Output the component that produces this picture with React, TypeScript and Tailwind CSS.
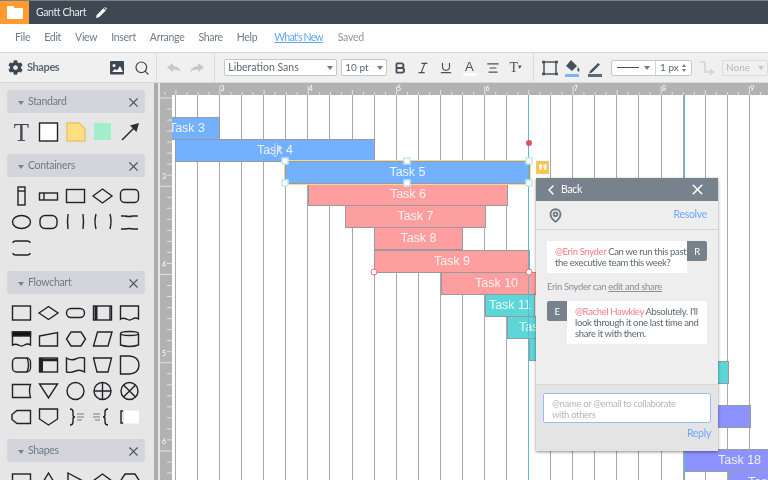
import { ReactNode } from "react";
import { Bold, ChevronLeft, Italic, Underline, X, Search, MapPin, AlignCenter } from "lucide-react";
import { FaCog } from "react-icons/fa";

const GRID_LINES = Array.from({ length: 27 }, (_, i) => 175 + i * 22.07);
const MAJOR_TICKS = [3, 4, 5, 6, 7, 8, 9];

const BARS = [
  { label: "Task 3", left: 154, right: 219, top: 117, color: "#73b1ff" },
  { label: "Task 4", left: 175, right: 374, top: 139, color: "#73b1ff" },
  { label: "Task 5", left: 285, right: 529, top: 161, color: "#73b1ff" },
  { label: "Task 6", left: 308, right: 507, top: 183, color: "#ff9e9e" },
  { label: "Task 7", left: 345, right: 485, top: 205, color: "#ff9e9e" },
  { label: "Task 8", left: 374, right: 462, top: 227, color: "#ff9e9e" },
  { label: "Task 9", left: 374, right: 529, top: 250, color: "#ff9e9e" },
  { label: "Task 10", left: 441, right: 551, top: 272, color: "#ff9e9e" },
  { label: "Task 11", left: 485, right: 534, top: 294, color: "#5cd6d6" },
  { label: "Task 12", left: 507, right: 573, top: 316, color: "#5cd6d6" },
  { label: "Task 13", left: 529, right: 640, top: 338, color: "#5cd6d6" },
  { label: "Task 14", left: 600, right: 728, top: 361, color: "#5cd6d6" },
  { label: "Task 16", left: 600, right: 750, top: 405, color: "#8c93ff" },
  { label: "Task 18", left: 684, right: 794, top: 449, color: "#8c93ff" },
  { label: "Task 19", left: 728, right: 810, top: 471, color: "#8c93ff" },
];

const MENU = ["File", "Edit", "View", "Insert", "Arrange", "Share", "Help"];

const Icon = ({ children }: { children: ReactNode }) => (
  <svg width="27" height="26" viewBox="0 0 27 26" fill="none" stroke="#1f2327" strokeWidth="1.4">
    {children}
  </svg>
);

const STANDARD = [
  <text key="t" x="13.5" y="22" textAnchor="middle" fontFamily="Liberation Serif" fontSize="25" fill="#3d4852" stroke="none">T</text>,
  <rect key="r" x="4.5" y="4" width="18" height="18" fill="#fff" strokeWidth="1.4" />,
  <path key="n" d="M5 4h12l6 6v12H5z" fill="#ffdf80" stroke="#e8c468" />,
  <rect key="g" x="5" y="4" width="17" height="17" fill="#a0efc8" stroke="none" />,
  <g key="a"><path d="M6 21L20 7" strokeWidth="1.4" /><path d="M23 4l-9 2.5 6.5 6.5z" fill="#2b2f33" stroke="none" /></g>,
];

const CONTAINERS = [
  <g key="1"><rect x="10" y="4" width="7" height="18" /><path d="M10 8h7" /></g>,
  <g key="2"><rect x="4.5" y="10" width="18" height="7" /><path d="M9 10v7" /></g>,
  <rect key="3" x="4.5" y="6.5" width="18" height="13" />,
  <path key="4" d="M4 13l9.5-7 9.5 7-9.5 7z" />,
  <rect key="5" x="4.5" y="6.5" width="18" height="13" rx="4" />,
  <ellipse key="6" cx="13.5" cy="13" rx="9" ry="6.5" />,
  <rect key="7" x="5" y="6.5" width="17" height="13" rx="5" />,
  <path key="8" d="M6 5q-1 7.500 0 15M21 5q1 7.500 0 15" />,
  <path key="9" d="M7 5q-2 7.500 0 15M21 5q2 7.500 0 15" />,
  <path key="10" d="M5 7h4q4 1 8 0h5M5 20h4q4-1 8 0h5" />,
  <path key="11" d="M5 8q0-2 3-2h11q3 0 3 2M5 18q0 2 3 2h11q3 0 3-2" />,
];

const FLOWCHART = [
  <rect key="1" x="4.500" y="6" width="18" height="14" />,
  <path key="2" d="M4 13l9.500-6.500 9.500 6.500-9.500 6.500z" />,
  <rect key="3" x="4.500" y="8.500" width="18" height="9" rx="4.500" />,
  <g key="4"><rect x="4.500" y="6" width="18" height="14" /><path d="M7 6v14" strokeWidth="3" /><path d="M21 6v14" /></g>,
  <path key="5" d="M4.500 6h18v13q-3-2-6 0t-6 0q-3-1.500-6 0z" />,
  <g key="6"><path d="M4.500 6h18v13q-3-2-6 0t-6 0q-3-1.500-6 0z" /><rect x="4.500" y="6" width="18" height="4" fill="#111" /></g>,
  <path key="7" d="M4.500 10l18-3.500v13.500h-18z" />,
  <path key="8" d="M9 6h10l4.500 7-4.500 7H9l-4.500-7z" />,
  <path key="9" d="M8.500 6h14.500l-4 14H4.500z" />,
  <g key="10"><path d="M4.500 8v11q9 3 18 0V8" /><ellipse cx="13.500" cy="7.500" rx="9" ry="2" /></g>,
  <g key="11"><rect x="4.500" y="6" width="18" height="14" rx="4" /><path d="M19 6q3 7 0 14" /></g>,
  <g key="12"><rect x="4.500" y="6" width="18" height="14" /><path d="M6.500 6v14" strokeWidth="3" /><path d="M4.500 8h18" strokeWidth="2.500" /></g>,
  <path key="13" d="M4.500 6q4.500 3 9 1t9-1v14q-4.500-3-9-1t-9 1z" />,
  <path key="14" d="M4.500 6h18l-3.500 14h-11z" />,
  <path key="15" d="M4.500 4h9q9.500 1 9.500 9t-9.500 9h-9z" />,
  <path key="16" d="M4.500 6.500h18q-2 6.500 0 13h-18z" />,
  <path key="17" d="M4.500 6h18l-9 14z" />,
  <circle key="18" cx="13.500" cy="13" r="8.500" />,
  <g key="19"><circle cx="13.500" cy="13" r="8.500" /><path d="M5 13h17M13.500 4.500v17" /></g>,
  <g key="20"><circle cx="13.500" cy="13" r="8.500" /><path d="M7.500 7l12 12M19.500 7l-12 12" /></g>,
  <path key="21" d="M9 6.500h13.500v13H9l-5-4v-5z" />,
  <path key="22" d="M4.500 5h18v10l-9 6-9-6z" />,
  <g key="23"><path d="M8 5q3 0 3 3v3q0 2 2 2-2 0-2 2v3q0 3-3 3" /><path d="M15 10h7M15 13h7M15 16h5" stroke="#9aa0a6" strokeWidth="1.300" /></g>,
  <g key="24"><path d="M19 5q-3 0-3 3v3q0 2-2 2 2 0 2 2v3q0 3 3 3" /><path d="M4 10h7M4 13h7M6 16h5" stroke="#9aa0a6" strokeWidth="1.300" /></g>,
  <g key="25"><rect x="8" y="6.500" width="15" height="13" fill="#fff" stroke="none" /><path d="M7 7H5v12h2" /></g>,
];

const SHAPES = [
  <rect key="1" x="4.500" y="6" width="18" height="14" />,
  <path key="2" d="M13.500 5l9 15h-18z" />,
  <path key="3" d="M6 5l15 8-15 8z" />,
  <path key="4" d="M4 13l9.500-7 9.500 7-9.500 7z" />,
  <path key="5" d="M9 6h10l4.500 7-4.500 7H9l-4.500-7z" />,
];

const Section = ({ title, shapes, className = "mb-[8px]" }: { title: string; shapes: ReactNode[]; className?: string }) => (
  <div className={className}>
    <div className="flex h-[23px] items-center rounded-[3px] bg-[#d3d5da] pl-[11px] pr-[4px] pt-px text-[10.5px] tracking-[-0.3px] text-[#6f7a85]">
      <span className="mr-[4px] mt-[1px] h-0 w-0 border-x-[3px] border-t-[4px] border-x-transparent border-t-[#78828c]" />
      <span>{title}</span>
      <X size={15} strokeWidth={1.8} className="ml-auto text-[#4c5560]" />
    </div>
    <div className="mt-[6px] grid grid-cols-[repeat(5,27px)] auto-rows-[26px] pb-[1px] pl-[1px]">
      {shapes.map((shape, i) => (
        <Icon key={i}>{shape}</Icon>
      ))}
    </div>
  </div>
);

const Select = ({ label, className, muted }: { label: string; className: string; muted?: boolean }) => (
  <div className={`flex h-[17px] items-center justify-between rounded-[2px] border px-[3px] ${muted ? "border-[#dcdcdc] text-[#b5b9bd]" : "border-[#c4c7ca] bg-white text-[#5d6873]"} ${className}`}>
    <span>{label}</span>
    <span className={`h-0 w-0 border-x-[3px] border-t-[4px] border-x-transparent ${muted ? "border-t-[#c4c7ca]" : "border-t-[#6f7a85]"}`} />
  </div>
);

const Rulers = () => (
  <>
    <svg className="absolute left-0 top-0 z-20" width="608" height="12">
      <rect width="608" height="12" fill="#b2b2b2" />
      {Array.from({ length: 60 }, (_, i) => (
        <line key={i} x1={60 + (i - 8) * 11.03} x2={60 + (i - 8) * 11.03} y1={i % 8 === 0 ? 3 : i % 4 === 0 ? 7 : 9} y2="12" stroke="#e3e3e3" />
      ))}
      {MAJOR_TICKS.map((n, i) => (
        <text key={n} x={60.5 + i * 88.3} y="7.500" fontFamily="Lato" fontSize="7" fill="#fff">{n}</text>
      ))}
    </svg>
    <svg className="absolute left-0 top-[12px] z-20" width="12" height="385">
      <rect width="12" height="385" fill="#b2b2b2" />
      {Array.from({ length: 36 }, (_, i) => (
        <line key={i} x1={i % 8 === 0 ? 0 : 7} x2="12" y1={i * 11.03 + 3} y2={i * 11.03 + 3} stroke="#e3e3e3" />
      ))}
      {[3, 4, 5, 6].map((n, i) => (
        <text key={n} x="2" y={84 + i * 88.3} fontFamily="Lato" fontSize="7" fill="#fff">{n}</text>
      ))}
    </svg>
  </>
);

const Handle = ({ x, y, round }: { x: number; y: number; round?: boolean }) => (
  <div
    className={`absolute z-10 h-[7px] w-[7px] -translate-x-1/2 -translate-y-1/2 border bg-white ${round ? "rounded-full border-[#ee6e73]" : "border-[#a8dcec]"}`}
    style={{ left: x - 160, top: y - 83 }}
  />
);

const CommentPanel = () => (
  <div className="absolute left-[376px] top-[95px] z-30 flex h-[273px] w-[182px] flex-col bg-[#eeeeee] text-[9.5px] tracking-[-0.35px] text-[#5d6873] shadow-[0_1px_3px_rgba(0,0,0,0.45)]">
    <div className="flex h-[23px] items-center bg-[#78828c] pl-[7px] pr-[12px] text-[10.5px] tracking-[-0.3px] text-white">
      <ChevronLeft size={16} strokeWidth={2.2} />
      <span className="ml-[2px]">Back</span>
      <X size={17} strokeWidth={2.2} className="ml-auto" />
    </div>
    <div className="flex h-[29px] items-center border-b border-[#d5d5d5] pl-[12px] pr-[11px]">
      <MapPin size={15} strokeWidth={3} className="text-[#6f7a85]" />
      <span className="ml-auto text-[10.5px] tracking-[-0.3px] text-[#6aaaf5]">Resolve</span>
    </div>
    <div className="flex-1 whitespace-nowrap px-[11px] pt-[11px] leading-[11px]">
      <div className="flex">
        <div className="h-[32px] w-[140px] bg-white pl-[8px] pt-[5px]">
          <span className="text-[#f07c7c]">@Erin Snyder</span> Can we run this past
          <br />
          the executive team this week?
        </div>
        <div className="flex h-[20px] w-[20px] items-center justify-center rounded-r-[2px] bg-[#78828c] text-white">R</div>
      </div>
      <div className="mt-[8px] h-[20px] text-[#8a9097]">
        Erin Snyder can <span className="underline">edit and share</span>
      </div>
      <div className="flex">
        <div className="flex h-[20px] w-[20px] items-center justify-center rounded-l-[2px] bg-[#78828c] text-white">E</div>
        <div className="h-[43px] w-[140px] bg-white pl-[8px] pt-[5px]">
          <span className="text-[#f07c7c]">@Rachel Hawkley</span> Absolutely. I'll
          <br />
          look through it one last time and
          <br />
          share it with them.
        </div>
      </div>
    </div>
    <div className="flex h-[67px] flex-col border-t border-[#d8d8d8] bg-[#e4e4e4] px-[7px] pt-[8px]">
      <div className="h-[30px] rounded-[2px] border border-[#8ec0ff] bg-white px-[8px] pt-[4px] leading-[11px] text-[#b4b8bc]">
        @name or @email to collaborate
        <br />
        with others
      </div>
      <div className="mt-[3px] text-right text-[10.5px] tracking-[-0.3px] text-[#6aaaf5]">Reply</div>
    </div>
  </div>
);

const Canvas = () => (
  <div className="relative flex-1 overflow-hidden bg-white">
    <svg className="absolute left-0 top-0" width="608" height="397">
      {GRID_LINES.map((x) => (
        <line key={x} x1={Math.round(x) - 159.5} x2={Math.round(x) - 159.5} y1="12" y2="397" stroke="#a8a8a8" />
      ))}
    </svg>
    {BARS.map((bar) => (
      <div
        key={bar.label}
        className="absolute flex h-[23px] items-center justify-center border border-[#979a9e] font-['Liberation_Sans'] text-[12.500px] text-white/85"
        style={{ left: bar.left - 160, top: bar.top - 83, width: bar.right - bar.left + 1, backgroundColor: bar.color }}
      >
        {bar.label}
      </div>
    ))}
    <div className="absolute left-[124px] top-[77px] h-[25px] w-[247px] border border-[#f5dc8c]" />
    <div className="absolute left-[368px] top-0 h-full w-px bg-[#5fb6d6]" />
    <div className="absolute left-[524px] top-0 h-full w-px bg-[#5fb6d6]" />
    <div className="absolute left-[366px] top-[57px] h-[6px] w-[6px] rounded-full bg-[#e0505f]" />
    <svg className="absolute left-[110px] top-[60px]" width="12" height="16" fill="#d5e4fa" stroke="#c2d4ec">
      <path d="M5 0l0 14M2 11l3 3 3-3" fill="none" />
      <path d="M7 5l3-2.500 2 2.500-2 2.500z" stroke="none" />
    </svg>
    {[285, 407, 529].map((x) => (
      <Handle key={x} x={x} y={161} />
    ))}
    {[285, 407, 529].map((x) => (
      <Handle key={x} x={x} y={183} />
    ))}
    <Handle x={374} y={272} round />
    <Handle x={529} y={272} round />
    <svg className="absolute left-[376px] top-[78px]" width="13" height="13" viewBox="0 0 13 13">
      <rect width="13" height="13" fill="#f9c55a" />
      <path d="M3 3.500h3v3L5 9H3.500l.5-2.500H3zM7.500 3.500h3v3L9.500 9H8l.5-2.500h-1z" fill="#fff" />
    </svg>
    <CommentPanel />
    <Rulers />
  </div>
);

const Toolbar = () => (
  <div className="flex h-[31px] items-center border-y border-[#d8d8d8] bg-[#f0f0f0] text-[#5d6873]">
    <div className="flex h-full w-[159px] items-center border-r border-[#dcdcdc] pl-[8px] pr-[6px]">
      <FaCog size={15} className="text-[#3d4852]" />
      <span className="ml-[4px] text-[11px] font-bold tracking-[-0.4px] text-[#5d6873]">Shapes</span>
      <svg className="ml-auto mr-[9px]" width="15" height="14" viewBox="0 0 15 14">
        <rect width="14" height="13.500" rx="1" fill="#3d4852" />
        <circle cx="4" cy="4.500" r="1.500" fill="#fff" />
        <path d="M2 11l3-3 2 1.500L10 5l3 6z" fill="#fff" />
      </svg>
      <Search size={16} strokeWidth={1.8} className="text-[#3d4852]" />
    </div>
    <div className="flex h-full w-[59px] items-center justify-center gap-[9px] border-r border-[#dcdcdc]">
      <svg width="14" height="12" viewBox="0 0 14 12" fill="#c4c8cc"><path d="M0 5.500L6 1v3q6 0 8 6-3-3-8-2.500V10z" /></svg>
      <svg width="14" height="12" viewBox="0 0 14 12" fill="#c4c8cc"><path d="M14 5.500L8 1v3q-6 0-8 6 3-3 8-2.500V10z" /></svg>
    </div>
    <div className="ml-[9px] flex h-full w-[314px] items-center border-r border-[#dcdcdc]">
      <Select label="Liberation Sans" className="w-[113px] text-[10.5px]" />
      <Select label="10 pt" className="ml-[4px] w-[46px] text-[10px]" />
      <div className="ml-[1px] flex items-center">
        <span className="flex w-[23.2px] justify-center"><Bold size={14} strokeWidth={3.2} className="text-[#48525c]" /></span>
        <span className="flex w-[23.2px] justify-center"><Italic size={14} strokeWidth={2} className="text-[#48525c]" /></span>
        <span className="flex w-[23.2px] justify-center"><Underline size={14} strokeWidth={2} className="text-[#48525c]" /></span>
        <span className="flex w-[23.2px] flex-col items-center font-['Liberation_Sans'] text-[13px] leading-[13px] text-[#48525c]">
          A<span className="h-[3px] w-[13px] bg-white" />
        </span>
        <span className="flex w-[23.2px] justify-center"><AlignCenter size={14} strokeWidth={2} className="text-[#48525c]" /></span>
        <span className="flex w-[23.2px] items-center justify-center font-['Liberation_Serif'] text-[14px] text-[#48525c]">T<span className="text-[7px]">▾</span></span>
      </div>
    </div>
    <div className="ml-[8px] flex h-full flex-1 items-center text-[#48525c]">
      <svg width="16" height="16" viewBox="0 0 16 16" fill="none" stroke="#48525c" strokeWidth="1.500">
        <rect x="2" y="2" width="12" height="12" />
        <path d="M0 2h3M13 2h3M0 14h3M13 14h3" strokeWidth="2.500" />
      </svg>
      <svg className="ml-[7px]" width="16" height="18" viewBox="0 0 16 18">
        <path d="M6 1l6 6-5 5-6-5z" fill="#48525c" />
        <path d="M13 8q2 2.500 1.500 4-1 1-2 0-.5-1.500.5-4z" fill="#48525c" />
        <rect y="15" width="14" height="3" fill="#7db4f5" />
      </svg>
      <svg className="ml-[7px]" width="14" height="18" viewBox="0 0 14 18">
        <path d="M2 12l8-8 2 1.500-8 8-3 1z" fill="#48525c" />
        <rect y="15" width="14" height="3" fill="#5d6873" />
      </svg>
      <div className="ml-[9px] flex h-[16px] w-[81px] items-center rounded-[2px] border border-[#c4c7ca] bg-white text-[10px]">
        <div className="flex h-full w-[43px] grow items-center justify-between border-r border-[#d5d5d5] px-[5px]">
          <span className="h-px w-[22px] bg-[#48525c]" />
          <span className="h-0 w-0 border-x-[3px] border-t-[4px] border-x-transparent border-t-[#6f7a85]" />
        </div>
        <span className="ml-[4px] w-[22px] text-[#5d6873]">1 px</span>
        <span className="flex w-[9px] flex-col gap-[2px]">
          <span className="h-0 w-0 border-x-[2.5px] border-b-[3px] border-x-transparent border-b-[#6f7a85]" />
          <span className="h-0 w-0 border-x-[2.5px] border-t-[3px] border-x-transparent border-t-[#6f7a85]" />
        </span>
      </div>
      <svg className="ml-[7px]" width="16" height="14" viewBox="0 0 16 14" fill="none" stroke="#d2d2d2" strokeWidth="1.500">
        <path d="M1 1h5v10h7M11 8l3 3-3 3" />
      </svg>
      <Select label="None" muted className="ml-[7px] !h-[16px] w-[46px] shrink-0 text-[10px]" />
    </div>
  </div>
);

export default function App() {
  return (
    <div className="flex h-[480px] w-[768px] flex-col overflow-hidden bg-white font-['Lato',sans-serif] blur-[0.4px]">
      <div className="flex h-[24px] items-center border-t border-[#78828c] bg-[#3d4852] text-white">
        <div className="flex h-full w-[29px] items-center justify-center bg-[#ff9b30]">
          <svg width="16" height="13" viewBox="0 0 16 13" fill="#fff">
            <path d="M1 0h5l1.500 2H15a1 1 0 0 1 1 1v9a1 1 0 0 1-1 1H1a1 1 0 0 1-1-1V1a1 1 0 0 1 1-1z" />
          </svg>
        </div>
        <span className="ml-[7px] text-[10.5px] tracking-[-0.4px] text-[#e6e8ea]">Gantt Chart</span>
        <svg className="ml-[10px]" width="11" height="11" viewBox="0 0 11 11" fill="#fff">
          <path d="M0 11l.7-3L7.500 1.200l2.300 2.300L3 10.300zM8.300.500l.8-.5 1.900 1.900-.5.800z" />
        </svg>
      </div>
      <div className="flex h-[28px] items-center bg-white pl-[15px] text-[10.5px] tracking-[-0.3px] text-[#6f7a85]">
        <div className="flex gap-[14px]">
          {MENU.map((item) => (
            <span key={item}>{item}</span>
          ))}
        </div>
        <span className="ml-[17px] tracking-[-0.8px] text-[#5fa5f5] underline">What's New</span>
        <span className="ml-[15px] text-[#8f979e]">Saved</span>
      </div>
      <Toolbar />
      <div className="flex min-h-0 flex-1">
        <div className="w-[154px] shrink-0 overflow-hidden bg-[#e6e6e6] pl-[7px] pr-[9px] pt-[7px]">
          <Section title="Standard" shapes={STANDARD} />
          <Section title="Containers" shapes={CONTAINERS} className="mb-[9px]" />
          <Section title="Flowchart" shapes={FLOWCHART} />
          <Section title="Shapes" shapes={SHAPES} />
        </div>
        <div className="w-[4px] shrink-0 bg-[#ababab]" />
        <div className="w-[2px] shrink-0 bg-[#e6e6e6]" />
        <Canvas />
      </div>
    </div>
  );
}
